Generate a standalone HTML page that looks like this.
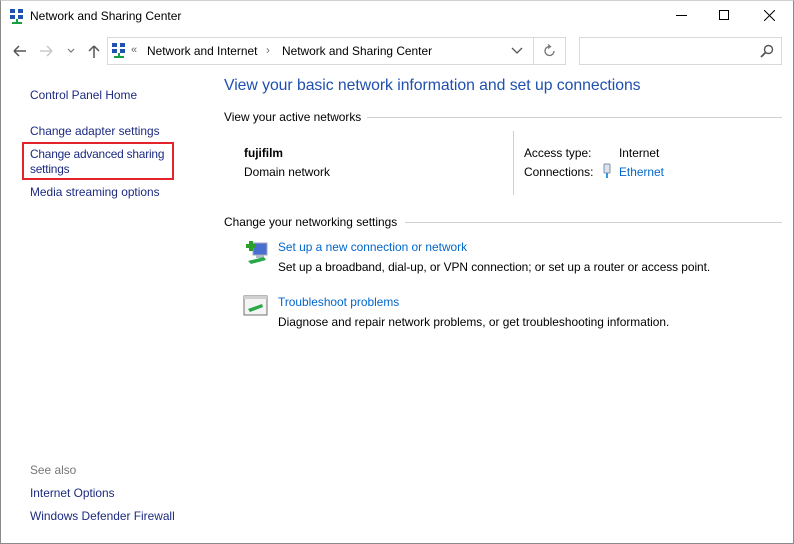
<!DOCTYPE html>
<html><head><meta charset="utf-8"><style>
*{margin:0;padding:0;box-sizing:border-box}
body{width:794px;height:544px;background:#fff;font-family:"Liberation Sans",sans-serif;font-size:11.9px;color:#000;position:relative;overflow:hidden}
.a{position:absolute;white-space:nowrap}
.nav{color:#1c2a80}
.lnk{color:#0066cc}
.hr{position:absolute;height:1px;background:#d0d0d0}
</style></head><body>
<div class="a" style="left:0;top:0;width:794px;height:544px;border:1px solid #8a8a8a;border-top:1px solid #d0d0d0"></div>
<svg class="a" style="left:9px;top:8px" width="16" height="16" viewBox="0 0 16 16">
<rect x="1" y="1" width="5" height="4" fill="#2050b0"/><rect x="9" y="1" width="5" height="4" fill="#2050b0"/>
<rect x="1" y="7" width="5" height="4" fill="#2050b0"/><rect x="9" y="7" width="5" height="4" fill="#2050b0"/>
<rect x="7" y="11" width="2" height="3" fill="#18a040"/><rect x="3" y="14" width="10" height="2" fill="#18a040"/></svg>
<div class="a" style="left:30px;top:9px;font-size:12px">Network and Sharing Center</div>
<div class="a" style="left:676px;top:15px;width:11px;height:1px;background:#000"></div>
<div class="a" style="left:719px;top:10px;width:10px;height:10px;border:1px solid #000"></div>
<svg class="a" style="left:764px;top:10px" width="11" height="11"><path d="M0 0L11 11M11 0L0 11" stroke="#000" stroke-width="1"/></svg>
<svg class="a" style="left:10px;top:42px" width="100" height="18">
<path d="M4 9H16M4 9L9 4M4 9L9 14" stroke="#555" stroke-width="1.5" fill="none"/>
<path d="M30 9H42M42 9L37 4M42 9L37 14" stroke="#c8c8c8" stroke-width="1.5" fill="none"/>
<path d="M58 7L61 10L64 7" stroke="#777" stroke-width="1.2" fill="none"/>
<path d="M84 16V4M84 4L79 9M84 4L89 9" stroke="#555" stroke-width="1.5" fill="none"/></svg>
<div class="a" style="left:107px;top:37px;width:459px;height:28px;border:1px solid #d9d9d9"></div>
<div class="a" style="left:533px;top:38px;width:1px;height:26px;background:#d9d9d9"></div>
<svg class="a" style="left:111px;top:42px" width="16" height="16" viewBox="0 0 16 16">
<rect x="1" y="1" width="5" height="4" fill="#2050b0"/><rect x="9" y="1" width="5" height="4" fill="#2050b0"/>
<rect x="1" y="7" width="5" height="4" fill="#2050b0"/><rect x="9" y="7" width="5" height="4" fill="#2050b0"/>
<rect x="7" y="11" width="2" height="3" fill="#18a040"/><rect x="3" y="14" width="10" height="2" fill="#18a040"/></svg>
<div class="a" style="left:131px;top:44px;color:#666;font-size:11px">«</div>
<div class="a" style="left:147px;top:44px">Network and Internet</div>
<div class="a" style="left:266px;top:43px;color:#777">›</div>
<div class="a" style="left:282px;top:44px">Network and Sharing Center</div>
<svg class="a" style="left:511px;top:47px" width="12" height="8"><path d="M1 1L6 6L11 1" stroke="#555" stroke-width="1.3" fill="none"/></svg>
<svg class="a" style="left:543px;top:44px" width="14" height="14"><path d="M11 7A4.5 4.5 0 1 1 7 2.5" stroke="#777" stroke-width="1.3" fill="none"/><path d="M5 0.5L7.5 2.5L5 4.5" stroke="#777" stroke-width="1.2" fill="none"/></svg>
<div class="a" style="left:579px;top:37px;width:203px;height:28px;border:1px solid #d9d9d9"></div>
<svg class="a" style="left:760px;top:44px" width="14" height="14"><circle cx="8.5" cy="5.5" r="4" stroke="#555" stroke-width="1.4" fill="none"/><path d="M5.5 8.5L1 13" stroke="#555" stroke-width="1.8"/></svg>
<div class="a nav" style="left:30px;top:88px">Control Panel Home</div>
<div class="a nav" style="left:30px;top:124px">Change adapter settings</div>
<div class="a nav" style="left:30px;top:147px;line-height:15px;letter-spacing:-0.2px">Change advanced sharing<br>settings</div>
<div class="a" style="left:22px;top:142px;width:152px;height:38px;border:2px solid #e3242b"></div>
<div class="a nav" style="left:30px;top:185px">Media streaming options</div>
<div class="a" style="left:30px;top:463px;color:#777">See also</div>
<div class="a nav" style="left:30px;top:486px">Internet Options</div>
<div class="a nav" style="left:30px;top:509px">Windows Defender Firewall</div>
<div class="a" style="left:224px;top:77px;font-size:15.8px;color:#1f4fb0;letter-spacing:-0.05px">View your basic network information and set up connections</div>
<div class="a" style="left:224px;top:110px">View your active networks</div>
<div class="hr" style="left:367px;top:117px;width:415px"></div>
<div class="a" style="left:513px;top:131px;width:1px;height:64px;background:#d0d0d0"></div>
<div class="a" style="left:244px;top:146px;font-weight:bold">fujifilm</div>
<div class="a" style="left:244px;top:165px">Domain network</div>
<div class="a" style="left:524px;top:146px">Access type:</div>
<div class="a" style="left:619px;top:146px">Internet</div>
<div class="a" style="left:524px;top:165px">Connections:</div>
<svg class="a" style="left:602px;top:163px" width="10" height="16"><rect x="2" y="1" width="6" height="9" rx="1" fill="#dde3ee" stroke="#8090a8"/><rect x="4" y="10" width="2" height="5" fill="#2a9be0"/></svg>
<div class="a lnk" style="left:619px;top:165px">Ethernet</div>
<div class="a" style="left:224px;top:215px">Change your networking settings</div>
<div class="hr" style="left:405px;top:222px;width:377px"></div>
<svg class="a" style="left:243px;top:240px" width="28" height="26">
<rect x="10" y="3" width="14" height="12" fill="#4a6ed0" stroke="#a0a8c0"/><rect x="13" y="15" width="8" height="3" fill="#b0b8c8"/>
<path d="M3 6H13M8 1V11" stroke="#2aa02a" stroke-width="4"/>
<path d="M5 21L21 17L23 20L8 24Z" fill="#28a848"/></svg>
<div class="a lnk" style="left:278px;top:240px">Set up a new connection or network</div>
<div class="a" style="left:278px;top:260px;letter-spacing:-0.05px">Set up a broadband, dial-up, or VPN connection; or set up a router or access point.</div>
<svg class="a" style="left:243px;top:295px" width="26" height="22">
<rect x="1" y="1" width="23" height="19" fill="#f4f4f4" stroke="#707070"/><rect x="1" y="1" width="23" height="3" fill="#d0d0d0"/>
<path d="M5 14L19 9L20 12L7 17Z" fill="#28a848"/></svg>
<div class="a lnk" style="left:278px;top:295px">Troubleshoot problems</div>
<div class="a" style="left:278px;top:315px">Diagnose and repair network problems, or get troubleshooting information.</div>
</body></html>
